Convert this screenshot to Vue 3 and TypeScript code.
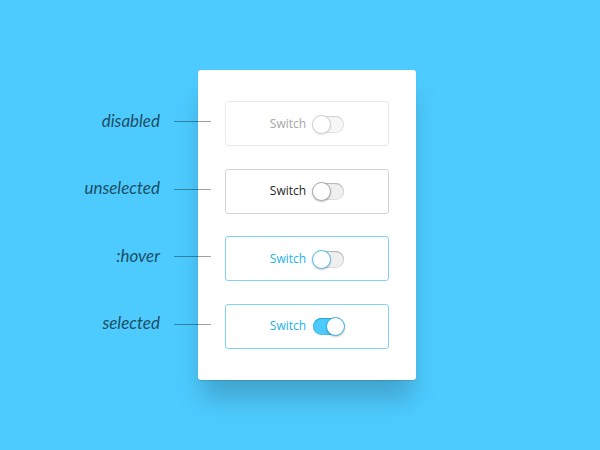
<script setup lang="ts">
import { ref } from 'vue'

type SwitchState = 'disabled' | 'unselected' | 'hover' | 'selected'

interface SwitchExample {
  state: SwitchState
  caption: string
  on: boolean
}

const examples = ref<SwitchExample[]>([
  { state: 'disabled', caption: 'disabled', on: false },
  { state: 'unselected', caption: 'unselected', on: false },
  { state: 'hover', caption: ':hover', on: false },
  { state: 'selected', caption: 'selected', on: true },
])
</script>

<template>
  <main class="stage">
    <div class="card"></div>
    <ul class="rows">
      <li v-for="item in examples" :key="item.state" class="row">
        <div class="note">
          <span class="caption">{{ item.caption }}</span>
          <span class="pointer"></span>
        </div>
        <label class="option" :class="item.state">
          <span class="name">Switch</span>
          <input
            v-model="item.on"
            class="toggle"
            type="checkbox"
            role="switch"
            :disabled="item.state === 'disabled'"
          />
        </label>
      </li>
    </ul>
  </main>
</template>

<style>
body {
  background: #4dcbff;
}
</style>

<style scoped>
.stage,
.row {
  display: grid;
  grid-template-columns: minmax(0, 1fr) 218px minmax(0, 1fr);
}

.stage {
  min-height: 100vh;
  box-sizing: border-box;
  padding-left: 14px;
  align-content: center;
  background: #4dcbff;
}

.card {
  grid-area: 1 / 2;
  border-radius: 3px;
  background: #fff;
  box-shadow:
    0 1px 1px rgba(0, 60, 90, 0.15),
    0 22px 24px -4px rgba(40, 80, 100, 0.32);
}

.rows {
  grid-area: 1 / 1 / 2 / 4;
  display: grid;
  align-content: space-between;
  min-height: 248px;
  margin: 0;
  padding: 31px 0;
  list-style: none;
  z-index: 1;
}

.note {
  display: flex;
  align-items: center;
  justify-content: flex-end;
  gap: 14px;
  margin-right: -13px;
  padding-bottom: 4px;
}

.caption {
  padding-bottom: 2px;
  color: #1d4e64;
  font: italic 17px/20px "Bradley Hand", "Segoe Print", Lato, sans-serif;
}

.pointer {
  width: 37px;
  height: 1px;
  background: rgba(0, 0, 0, 0.36);
}

.option {
  --ink: #262626;
  --frame: #d4d4d4;
  --knob: #a8a8a8;
  --track: #efefef;
  --edge: #b4b4b4;
  display: flex;
  align-items: center;
  justify-content: center;
  gap: 7px;
  box-sizing: border-box;
  height: 45px;
  margin: 0 27px;
  border: 1px solid var(--frame);
  border-radius: 3px;
  color: var(--ink);
  font: 12px/18px "Open Sans", "Noto Sans", sans-serif;
  cursor: pointer;
}

.disabled {
  --ink: #a6a6a6;
  --frame: #eaeaea;
  --knob: #cfcfcf;
  --track: #f7f7f7;
  --edge: #d4d4d4;
  cursor: default;
}

.hover {
  --ink: #20b2ee;
  --frame: #80d4f7;
  --knob: #48bce9;
}

.selected {
  --ink: #20b2ee;
  --frame: #80d4f7;
  --knob: #35b0e2;
  --track: #4dcbff;
  --edge: #2aa5d6;
}

.toggle {
  appearance: none;
  display: flex;
  align-items: center;
  flex: none;
  box-sizing: border-box;
  width: 31px;
  height: 17px;
  margin: 1px 0 0;
  border-radius: 9px;
  background: var(--track);
  box-shadow:
    inset 0 1px 1px var(--edge),
    inset 0 0 0 1px rgba(0, 0, 0, 0.08);
  cursor: inherit;
}

.toggle::before {
  content: "";
  flex: none;
  box-sizing: border-box;
  width: 19px;
  height: 19px;
  margin: 0 -1px;
  border: 1px solid var(--knob);
  border-radius: 50%;
  background: #fff;
  box-shadow: 0 1px 2px rgba(0, 0, 0, 0.22);
}

.toggle:checked {
  justify-content: flex-end;
}

.disabled .toggle::before {
  box-shadow: 0 1px 2px rgba(0, 0, 0, 0.1);
}
</style>
